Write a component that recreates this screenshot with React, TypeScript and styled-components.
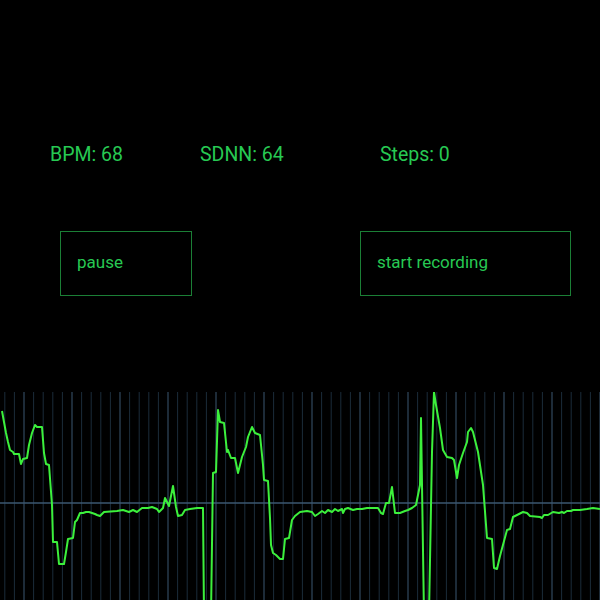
import React, { FC } from 'react';
import styled, { createGlobalStyle } from 'styled-components';

const TEXT_GREEN = '#27c953';
const BORDER_GREEN = '#1b7f36';
const LINE_GREEN = '#3cf03c';
const GRID_MINOR = '#1b2c3a';
const GRID_MAJOR = '#3b5770';

const GlobalStyle = createGlobalStyle`
  html, body {
    margin: 0;
    padding: 0;
    background: #000;
  }
  * {
    box-sizing: border-box;
    font-family: Roboto, "Liberation Sans", sans-serif;
  }
`;

const Page = styled.div`
  width: 600px;
  height: 600px;
  background: #000;
  display: flex;
  flex-direction: column;
  overflow: hidden;
`;

const Stats = styled.div`
  margin-top: 143px;
  padding-left: 50px;
  display: grid;
  grid-template-columns: 150px 180px auto;
`;

const Stat = styled.div`
  color: ${TEXT_GREEN};
  font-size: 19.5px;
  line-height: 24px;
`;

const Controls = styled.div`
  margin-top: 64px;
  padding-left: 60px;
  display: grid;
  grid-template-columns: 132px 211px;
  column-gap: 168px;
`;

const Button = styled.button`
  height: 65px;
  background: transparent;
  border: 1px solid ${BORDER_GREEN};
  border-radius: 0;
  color: ${TEXT_GREEN};
  font-size: 17px;
  text-align: left;
  padding: 0 0 4px 16px;
  cursor: pointer;
`;

const Chart = styled.svg`
  display: block;
  margin-top: auto;
  width: 600px;
  height: 208px;
`;

const wave: [number, number][] = [
  [2, 411], [6, 433], [8, 442], [10, 450], [13, 452], [14, 454], [19, 454], [21, 464], [23, 459],
  [27, 458], [29, 445], [32, 433], [35, 425], [37, 427], [42, 427], [44, 453], [46, 464], [49, 465],
  [52, 505], [53, 542], [57, 542], [59, 564], [64, 564], [66, 552], [68, 539], [73, 538], [75, 522],
  [77, 520], [80, 513], [83, 513], [86, 512], [89, 512], [92, 513], [95, 514], [97, 515], [100, 516],
  [104, 512], [117, 511], [123, 510], [129, 512], [133, 510], [137, 512], [142, 508], [148, 508],
  [152, 507], [157, 509], [159, 512], [163, 508], [165, 498], [169, 506], [173, 486], [176, 507],
  [178, 516], [182, 515], [185, 510], [190, 509], [197, 508], [200, 508], [203, 508], [204, 615],
  [211, 615], [213, 473], [216, 472], [218, 410], [220, 422], [224, 423], [227, 452], [228, 450],
  [231, 458], [235, 458], [238, 473], [242, 457], [246, 447], [248, 437], [252, 427], [255, 433],
  [260, 435], [263, 465], [264, 480], [268, 481], [270, 518], [271, 545], [273, 553], [276, 555],
  [280, 559], [283, 559], [285, 539], [289, 538], [292, 520], [295, 516], [300, 512], [307, 511],
  [312, 512], [315, 516], [318, 514], [322, 511], [325, 513], [328, 510], [332, 512], [335, 509],
  [338, 511], [342, 509], [343, 513], [345, 509], [348, 508], [353, 510], [357, 509], [362, 509],
  [367, 508], [372, 508], [378, 508], [381, 513], [383, 514], [386, 503], [389, 503], [392, 487],
  [395, 513], [400, 513], [405, 511], [408, 510], [412, 508], [416, 505], [418, 495], [420, 485],
  [421, 418], [422, 485], [424, 615], [429, 615], [432, 452], [434, 392], [436, 405], [440, 428],
  [443, 450], [447, 457], [452, 458], [454, 460], [457, 478], [459, 465], [463, 453], [467, 442],
  [468, 432], [471, 428], [473, 432], [478, 452], [483, 485], [487, 538], [492, 539], [494, 568],
  [497, 569], [500, 556], [507, 530], [510, 529], [513, 517], [517, 515], [523, 512], [527, 513],
  [530, 516], [540, 517], [542, 518], [544, 515], [548, 515], [553, 512], [559, 513], [562, 512],
  [564, 513], [567, 511], [571, 511], [573, 510], [580, 510], [587, 509], [593, 508], [600, 509],
];

const gridLines = Array.from({ length: 63 }, (_, k) => ({ x: 4.8 + 9.6 * k, major: (k - 2) % 5 === 0 }));

const App: FC = () => {
  return (
    <Page>
      <GlobalStyle />
      <Stats>
        <Stat>BPM: 68</Stat>
        <Stat>SDNN: 64</Stat>
        <Stat>Steps: 0</Stat>
      </Stats>
      <Controls>
        <Button>pause</Button>
        <Button>start recording</Button>
      </Controls>
      <Chart viewBox="0 392 600 208">
        {gridLines.map((g) => (
          <line
            key={g.x}
            x1={g.x}
            x2={g.x}
            y1={392}
            y2={600}
            stroke={g.major ? GRID_MAJOR : GRID_MINOR}
            strokeWidth={1}
          />
        ))}
        <line x1={0} x2={600} y1={503} y2={503} stroke={GRID_MAJOR} strokeWidth={1.5} />
        <polyline
          points={wave.map((p) => p.join(',')).join(' ')}
          fill="none"
          stroke={LINE_GREEN}
          strokeWidth={2}
          strokeLinejoin="round"
        />
      </Chart>
    </Page>
  );
};

export default App;
